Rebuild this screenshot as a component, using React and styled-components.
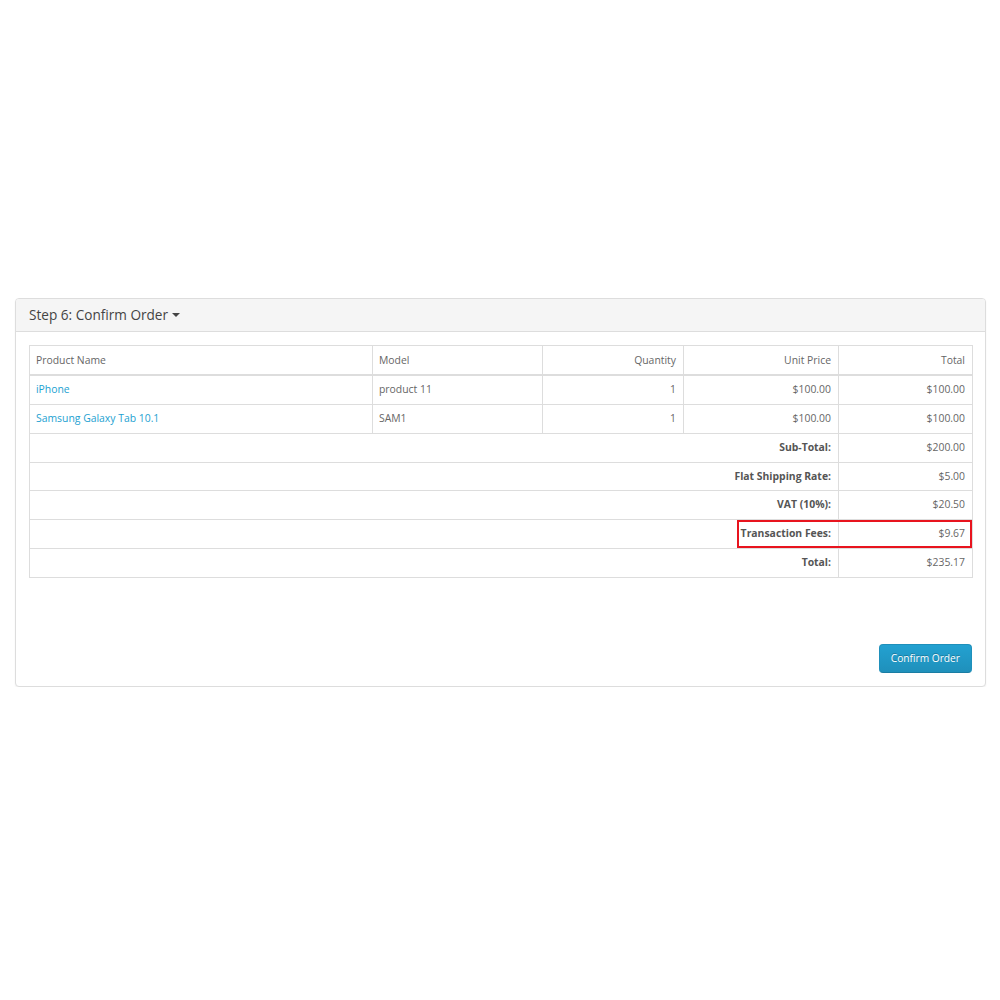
import React from 'react'
import styled, { createGlobalStyle } from 'styled-components'

const GlobalStyle = createGlobalStyle`
  html, body {
    margin: 0;
    padding: 0;
    background: #fff;
  }
  body {
    font-family: "Open Sans", "DejaVu Sans", sans-serif;
    font-size: 10.4px;
    line-height: 20px;
    color: #666;
  }
`

const Page = styled.div`
  width: 1000px;
  padding: 298px 14px 0 15px;
  box-sizing: border-box;
`

const Panel = styled.section`
  position: relative;
  border: 1px solid #ddd;
  border-radius: 4px;
  background: #fff;
  box-shadow: 0 1px 2px rgba(0, 0, 0, 0.06);
`

const PanelHeading = styled.div`
  background: #f5f5f5;
  border-bottom: 1px solid #ddd;
  border-radius: 3px 3px 0 0;
  padding: 6px 13px;
  height: 20px;
`

const PanelTitle = styled.h4`
  margin: 0;
  font-size: 13.6px;
  font-weight: 400;
  line-height: 20px;
  color: #444;
  display: flex;
  align-items: center;
`

const Caret = styled.span`
  display: inline-block;
  width: 0;
  height: 0;
  margin-left: 4px;
  border-top: 4px solid #444;
  border-left: 4px solid transparent;
  border-right: 4px solid transparent;
`

const PanelBody = styled.div`
  padding: 13px;
`

const Table = styled.table`
  width: 100%;
  table-layout: fixed;
  border-collapse: collapse;
  margin-bottom: 66px;
  border: 1px solid #ddd;
`

const Th = styled.td`
  border: 1px solid #ddd;
  border-bottom-width: 2px;
  padding: 4px 7px 4px 6px;
  font-weight: 400;
  text-align: ${({ $right }) => ($right ? 'right' : 'left')};
  color: #666;
`

const Td = styled.td`
  border: 1px solid #ddd;
  padding: 4px 7px 4px 6px;
  line-height: 19.85px;
  text-align: ${({ $right }) => ($right ? 'right' : 'left')};
  font-weight: ${({ $bold }) => ($bold ? 700 : 400)};
  color: ${({ $bold }) => ($bold ? '#555' : '#666')};
  white-space: nowrap;
`

const Link = styled.a`
  color: #23a1d1;
  text-decoration: none;
`

const Highlight = styled.div`
  position: absolute;
  left: 721px;
  top: 221px;
  width: 231px;
  height: 24px;
  border: 2px solid #e8141e;
  pointer-events: none;
`

const Buttons = styled.div`
  display: flex;
  justify-content: flex-end;
`

const Button = styled.button`
  font-family: inherit;
  font-size: 10.2px;
  line-height: 19px;
  color: #fff;
  padding: 4px 11px;
  border: 1px solid #1f90bb;
  border-bottom-color: #1a7da3;
  border-radius: 4px;
  background: linear-gradient(to bottom, #23a1d1, #1f90bb);
  text-shadow: 0 -1px 0 rgba(0, 0, 0, 0.25);
  cursor: pointer;
`

const products = [
  { name: 'iPhone', model: 'product 11', qty: 1, price: '$100.00', total: '$100.00' },
  { name: 'Samsung Galaxy Tab 10.1', model: 'SAM1', qty: 1, price: '$100.00', total: '$100.00' },
]

const totals = [
  ['Sub-Total:', '$200.00'],
  ['Flat Shipping Rate:', '$5.00'],
  ['VAT (10%):', '$20.50'],
  ['Transaction Fees:', '$9.67'],
  ['Total:', '$235.17'],
]

export default function App() {
  return (
    <>
      <GlobalStyle />
      <Page>
        <Panel>
          <PanelHeading>
            <PanelTitle>
              Step 6: Confirm Order <Caret />
            </PanelTitle>
          </PanelHeading>
          <PanelBody>
            <Table>
              <colgroup>
                <col style={{ width: 343 }} />
                <col style={{ width: 170 }} />
                <col style={{ width: 141 }} />
                <col style={{ width: 155 }} />
                <col style={{ width: 134 }} />
              </colgroup>
              <thead>
                <tr>
                  <Th>Product Name</Th>
                  <Th>Model</Th>
                  <Th $right>Quantity</Th>
                  <Th $right>Unit Price</Th>
                  <Th $right>Total</Th>
                </tr>
              </thead>
              <tbody>
                {products.map(p => (
                  <tr key={p.name}>
                    <Td>
                      <Link href="#">{p.name}</Link>
                    </Td>
                    <Td>{p.model}</Td>
                    <Td $right>{p.qty}</Td>
                    <Td $right>{p.price}</Td>
                    <Td $right>{p.total}</Td>
                  </tr>
                ))}
              </tbody>
              <tfoot>
                {totals.map(([label, value]) => (
                  <tr key={label}>
                    <Td colSpan={4} $right $bold>
                      {label}
                    </Td>
                    <Td $right>{value}</Td>
                  </tr>
                ))}
              </tfoot>
            </Table>
            <Buttons>
              <Button>Confirm Order</Button>
            </Buttons>
          </PanelBody>
          <Highlight />
        </Panel>
      </Page>
    </>
  )
}
